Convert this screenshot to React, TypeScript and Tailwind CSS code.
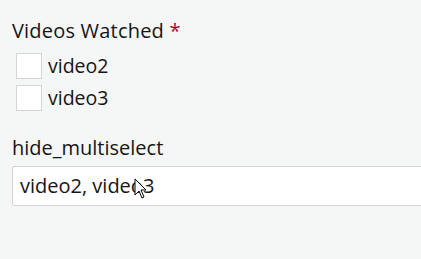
import { useState } from "react";

const options = ["video2", "video3"];

export default function App() {
  const [checked, setChecked] = useState<Record<string, boolean>>({});

  return (
    <div className="relative min-h-[259px] w-full overflow-hidden bg-[#f5f6f6] font-['Open_Sans',sans-serif] text-[#151515]">
      <div className="pl-3 pt-[19px]">
        {/* Checkbox group */}
        <div className="text-[20px] leading-[24px] tracking-[0.2px]">
          Videos Watched <span className="text-[#a8071a]">*</span>
        </div>
        <div className="mt-[10px] flex flex-col gap-[6px] pl-1">
          {options.map((o) => (
            <label key={o} className="flex items-center gap-[6px] text-[19.5px] leading-[26px]">
              <input
                type="checkbox"
                checked={!!checked[o]}
                onChange={() => setChecked({ ...checked, [o]: !checked[o] })}
                className="h-[26px] w-[26px] appearance-none border border-[#d4d4d4] bg-white"
              />
              {o}
            </label>
          ))}
        </div>

        {/* Text field */}
        <div className="mt-[25px] text-[20px] leading-[24px]">hide_multiselect</div>
        <div className="mt-[6px] flex h-[40px] w-[420px] items-center rounded-[2px] border border-[#d4d4d4] bg-white px-[7px] text-[20px]">
          video2, video3
        </div>
      </div>

      {/* mouse pointer */}
      <svg className="absolute left-[134px] top-[178px]" width="14" height="22" viewBox="0 0 14 22">
        <path d="M1 1 L1 17 L5 13 L8 20 L10 19 L7 12 L12 12 Z" fill="white" stroke="black" strokeWidth="1" strokeLinejoin="round" />
      </svg>
    </div>
  );
}
